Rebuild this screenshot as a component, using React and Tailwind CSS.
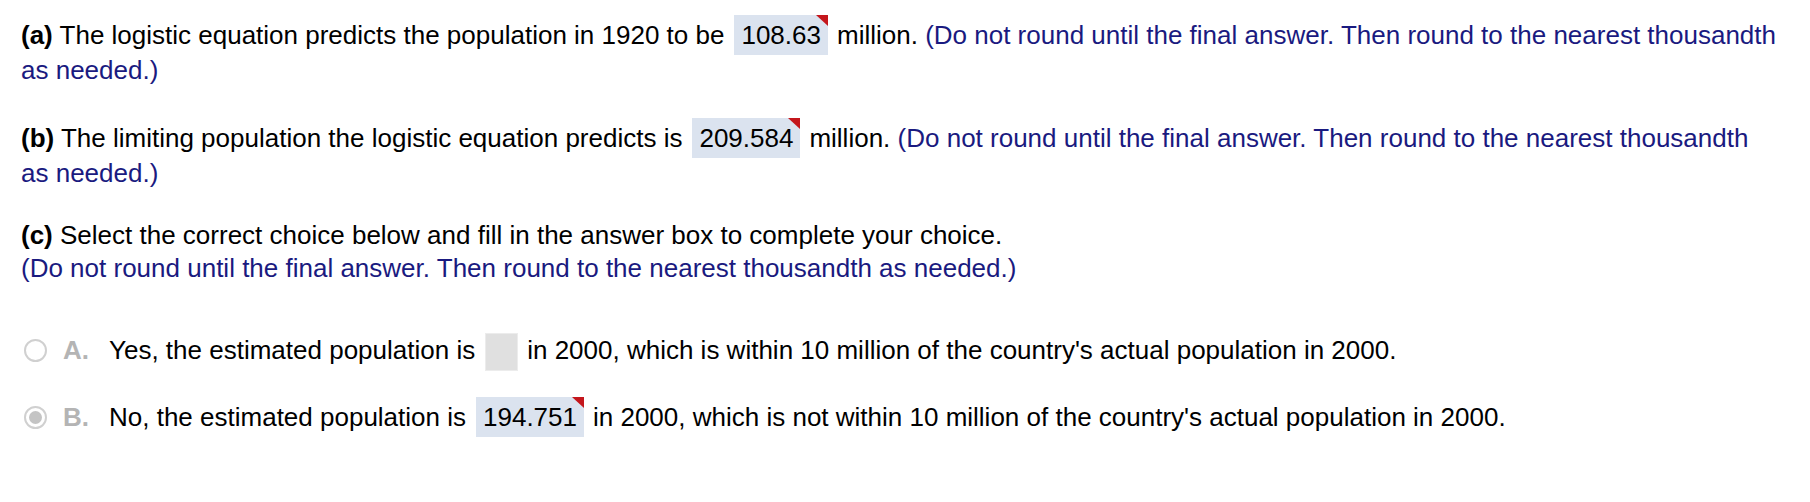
import React from "react";

function Answer({ value, empty }) {
  if (empty) {
    return (
      <span className="inline-block align-middle w-[33px] h-[38px] my-[-4px] ml-[10px] mr-[9px] bg-[#e0e0e0] border border-[#ececec]"></span>
    );
  }
  return (
    <span className="relative inline-block h-[40px] leading-[40px] my-[-3px] ml-[10px] mr-[9px] px-[7px] bg-[#dbe3ef] text-black">
      {value}
      <svg className="absolute top-0 right-0" width="12" height="11" viewBox="0 0 12 11">
        <polygon points="0,0 12,0 12,11" fill="#c4161c" />
      </svg>
    </span>
  );
}

function Radio({ checked }) {
  return (
    <span className="inline-flex items-center justify-center w-[23px] h-[23px] rounded-full border-2 border-[#d0d0d0] bg-white">
      {checked && <span className="block w-[13px] h-[13px] rounded-full bg-[#c4c4c4]"></span>}
    </span>
  );
}

export default function App() {
  return (
    <div
      className="w-[1810px] h-[502px] bg-white text-black text-[26px] pl-[21px] pt-[18px]"
      style={{ fontFamily: '"Liberation Sans", Arial, sans-serif' }}
    >
      <p className="leading-[35px]">
        <span className="font-bold">(a)</span> The logistic equation predicts the population in 1920 to be
        <Answer value="108.63" />
        million. <span className="text-[#1a1a80]">(Do not round until the final answer. Then round to the nearest thousandth</span>
        <br />
        <span className="text-[#1a1a80]">as needed.)</span>
      </p>
      <p className="leading-[35px] mt-[33px]">
        <span className="font-bold">(b)</span> The limiting population the logistic equation predicts is
        <Answer value="209.584" />
        million. <span className="text-[#1a1a80]">(Do not round until the final answer. Then round to the nearest thousandth</span>
        <br />
        <span className="text-[#1a1a80]">as needed.)</span>
      </p>
      <p className="leading-[33px] mt-[28px]">
        <span className="font-bold">(c)</span> Select the correct choice below and fill in the answer box to complete your choice.
        <br />
        <span className="text-[#1a1a80]">(Do not round until the final answer. Then round to the nearest thousandth as needed.)</span>
      </p>
      <div className="mt-[48px] flex flex-col gap-[33px]">
        <div className="flex items-center h-[34px]">
          <span className="ml-[3px] flex"><Radio /></span>
          <span className="ml-[16px] w-[46px] font-bold text-[#b4b4b4]">A.</span>
          <span className="leading-[34px]">
            Yes, the estimated population is
            <Answer empty />
            in 2000, which is within 10 million of the country's actual population in 2000.
          </span>
        </div>
        <div className="flex items-center h-[34px]">
          <span className="ml-[3px] flex"><Radio checked /></span>
          <span className="ml-[16px] w-[46px] font-bold text-[#b4b4b4]">B.</span>
          <span className="leading-[34px]">
            No, the estimated population is
            <Answer value="194.751" />
            in 2000, which is not within 10 million of the country's actual population in 2000.
          </span>
        </div>
      </div>
    </div>
  );
}
